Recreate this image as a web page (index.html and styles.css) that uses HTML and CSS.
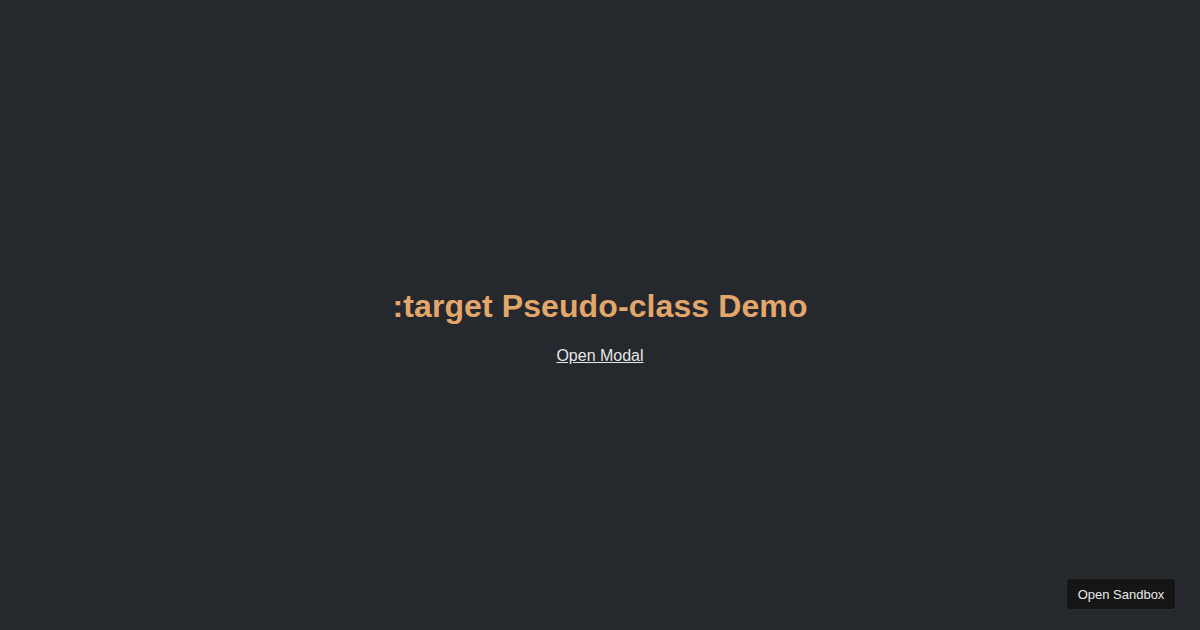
FILE: index.html
```html
<!DOCTYPE html>
<html lang="en">
<head>
<meta charset="utf-8">
<title>:target Pseudo-class Demo</title>
<link rel="stylesheet" href="styles.css">
</head>
<body>
<main class="page">
  <h1 class="title">:target Pseudo-class Demo</h1>
  <a class="open-link" href="#modal">Open Modal</a>
</main>
<button class="sandbox-btn" type="button">Open Sandbox</button>
</body>
</html>
```

FILE: styles.css
```css
html, body {
  margin: 0;
  padding: 0;
  background: #25282d;
  font-family: "Liberation Sans", Arial, sans-serif;
}
.page {
  height: 630px;
  box-sizing: border-box;
  padding-top: 23px;
  display: flex;
  flex-direction: column;
  align-items: center;
  justify-content: center;
}
.title {
  margin: 0 0 22px;
  font-size: 32px;
  font-weight: bold;
  color: #e3a66b;
  letter-spacing: 0.1px;
}
.open-link {
  font-size: 16px;
  color: #e6e6e6;
  text-decoration: underline;
}
.sandbox-btn {
  position: absolute;
  right: 24px;
  bottom: 20px;
  width: 110px;
  height: 32px;
  box-sizing: border-box;
  background: #151515;
  border: 1px solid #2c2e31;
  border-radius: 4px;
  color: #e8e8e8;
  font-family: "Liberation Sans", Arial, sans-serif;
  font-size: 13px;
  padding: 0;
  cursor: pointer;
}
```
